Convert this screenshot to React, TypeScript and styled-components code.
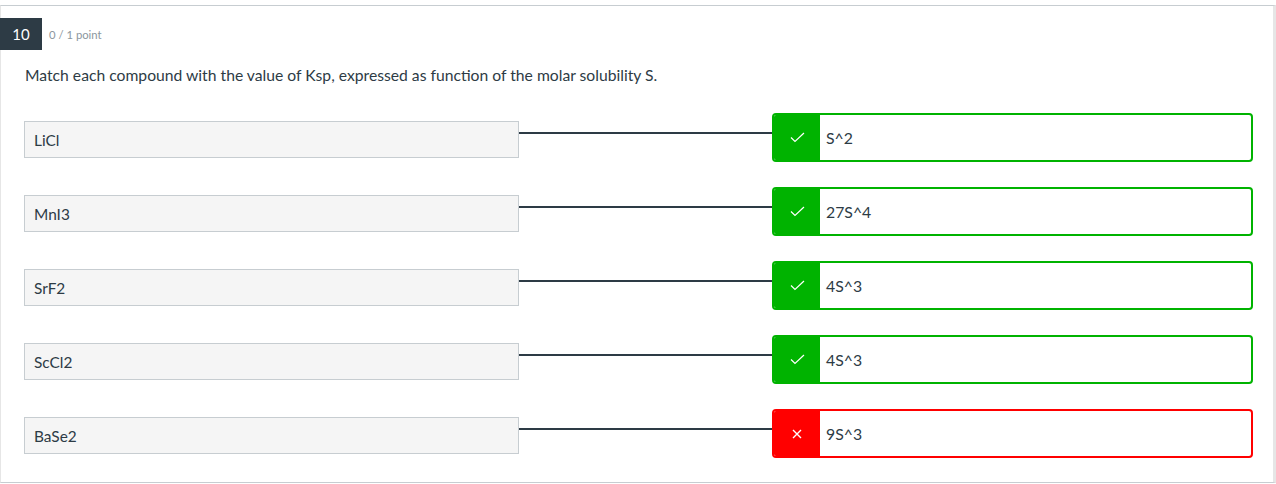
import styled, { createGlobalStyle } from "styled-components";

const GlobalStyle = createGlobalStyle`
  body {
    margin: 0;
    background: #ffffff;
    font-family: Lato, "Open Sans", Arial, sans-serif;
    color: #2d3b45;
  }
`;

const Page = styled.div`
  padding-top: 5px;
  width: 1276px;
  box-sizing: border-box;
`;

const Card = styled.div`
  box-sizing: border-box;
  height: 478px;
  border-top: 1px solid #c7cdd1;
  border-bottom: 1px solid #c7cdd1;
  border-left: 1px solid #e6e6e6;
  border-right: 3px solid #e6e6e6;
`;

const Header = styled.div`
  display: flex;
  align-items: center;
  margin-top: 12px;
  margin-left: -1px;
  height: 32px;
`;

const Badge = styled.div`
  width: 42px;
  height: 32px;
  background: #2d3b45;
  color: #ffffff;
  font-size: 15px;
  display: flex;
  align-items: center;
  justify-content: center;
`;

const Points = styled.span`
  margin-left: 7px;
  font-size: 11.3px;
  color: #8b969e;
`;

const Question = styled.p`
  margin: 15px 0 0 24px;
  font-size: 15.7px;
  line-height: 20px;
`;

const Rows = styled.div`
  display: flex;
  flex-direction: column;
  gap: 25px;
  margin-top: 28px;
  padding-left: 23px;
`;

const Row = styled.div`
  display: grid;
  grid-template-columns: 495px 253px 481px;
  height: 49px;
`;

const Compound = styled.div`
  box-sizing: border-box;
  margin-top: 8px;
  height: 37px;
  background: #f5f5f5;
  border: 1px solid #c7cdd1;
  padding-left: 9px;
  display: flex;
  align-items: center;
  font-size: 15.4px;
`;

const Connector = styled.div`
  margin-top: 19px;
  height: 2px;
  background: #2d3b45;
`;

const Answer = styled.div<{ $ok: boolean }>`
  box-sizing: border-box;
  height: 49px;
  border: 2px solid ${(p) => (p.$ok ? "#00b300" : "#ff0000")};
  border-radius: 4px;
  display: flex;
  align-items: stretch;
  overflow: hidden;
`;

const Mark = styled.div<{ $ok: boolean }>`
  width: 46px;
  background: ${(p) => (p.$ok ? "#00b300" : "#ff0000")};
  display: flex;
  align-items: center;
  justify-content: center;
`;

const AnswerText = styled.div`
  display: flex;
  align-items: center;
  padding-left: 6px;
  font-size: 15.8px;
`;

const Check = () => (
  <svg width="15" height="11" viewBox="0 0 15 11">
    <path d="M1 5.5 L5 9.5 L14 1" fill="none" stroke="#ffffff" strokeWidth="1.2" />
  </svg>
);

const Cross = () => (
  <svg width="10" height="10" viewBox="0 0 10 10">
    <path d="M1 1 L9 9 M9 1 L1 9" fill="none" stroke="#ffffff" strokeWidth="1.4" />
  </svg>
);

const matches = [
  { compound: "LiCl", answer: "S^2", ok: true },
  { compound: "MnI3", answer: "27S^4", ok: true },
  { compound: "SrF2", answer: "4S^3", ok: true },
  { compound: "ScCl2", answer: "4S^3", ok: true },
  { compound: "BaSe2", answer: "9S^3", ok: false },
];

export default function App() {
  return (
    <>
      <GlobalStyle />
      <Page>
        <Card>
          <Header>
            <Badge>10</Badge>
            <Points>0 / 1 point</Points>
          </Header>
          <Question>
            Match each compound with the value of Ksp, expressed as function of the molar solubility S.
          </Question>
          <Rows>
            {matches.map((m, idx) => (
              <Row key={idx}>
                <Compound>{m.compound}</Compound>
                <Connector />
                <Answer $ok={m.ok}>
                  <Mark $ok={m.ok}>{m.ok ? <Check /> : <Cross />}</Mark>
                  <AnswerText>{m.answer}</AnswerText>
                </Answer>
              </Row>
            ))}
          </Rows>
        </Card>
      </Page>
    </>
  );
}
